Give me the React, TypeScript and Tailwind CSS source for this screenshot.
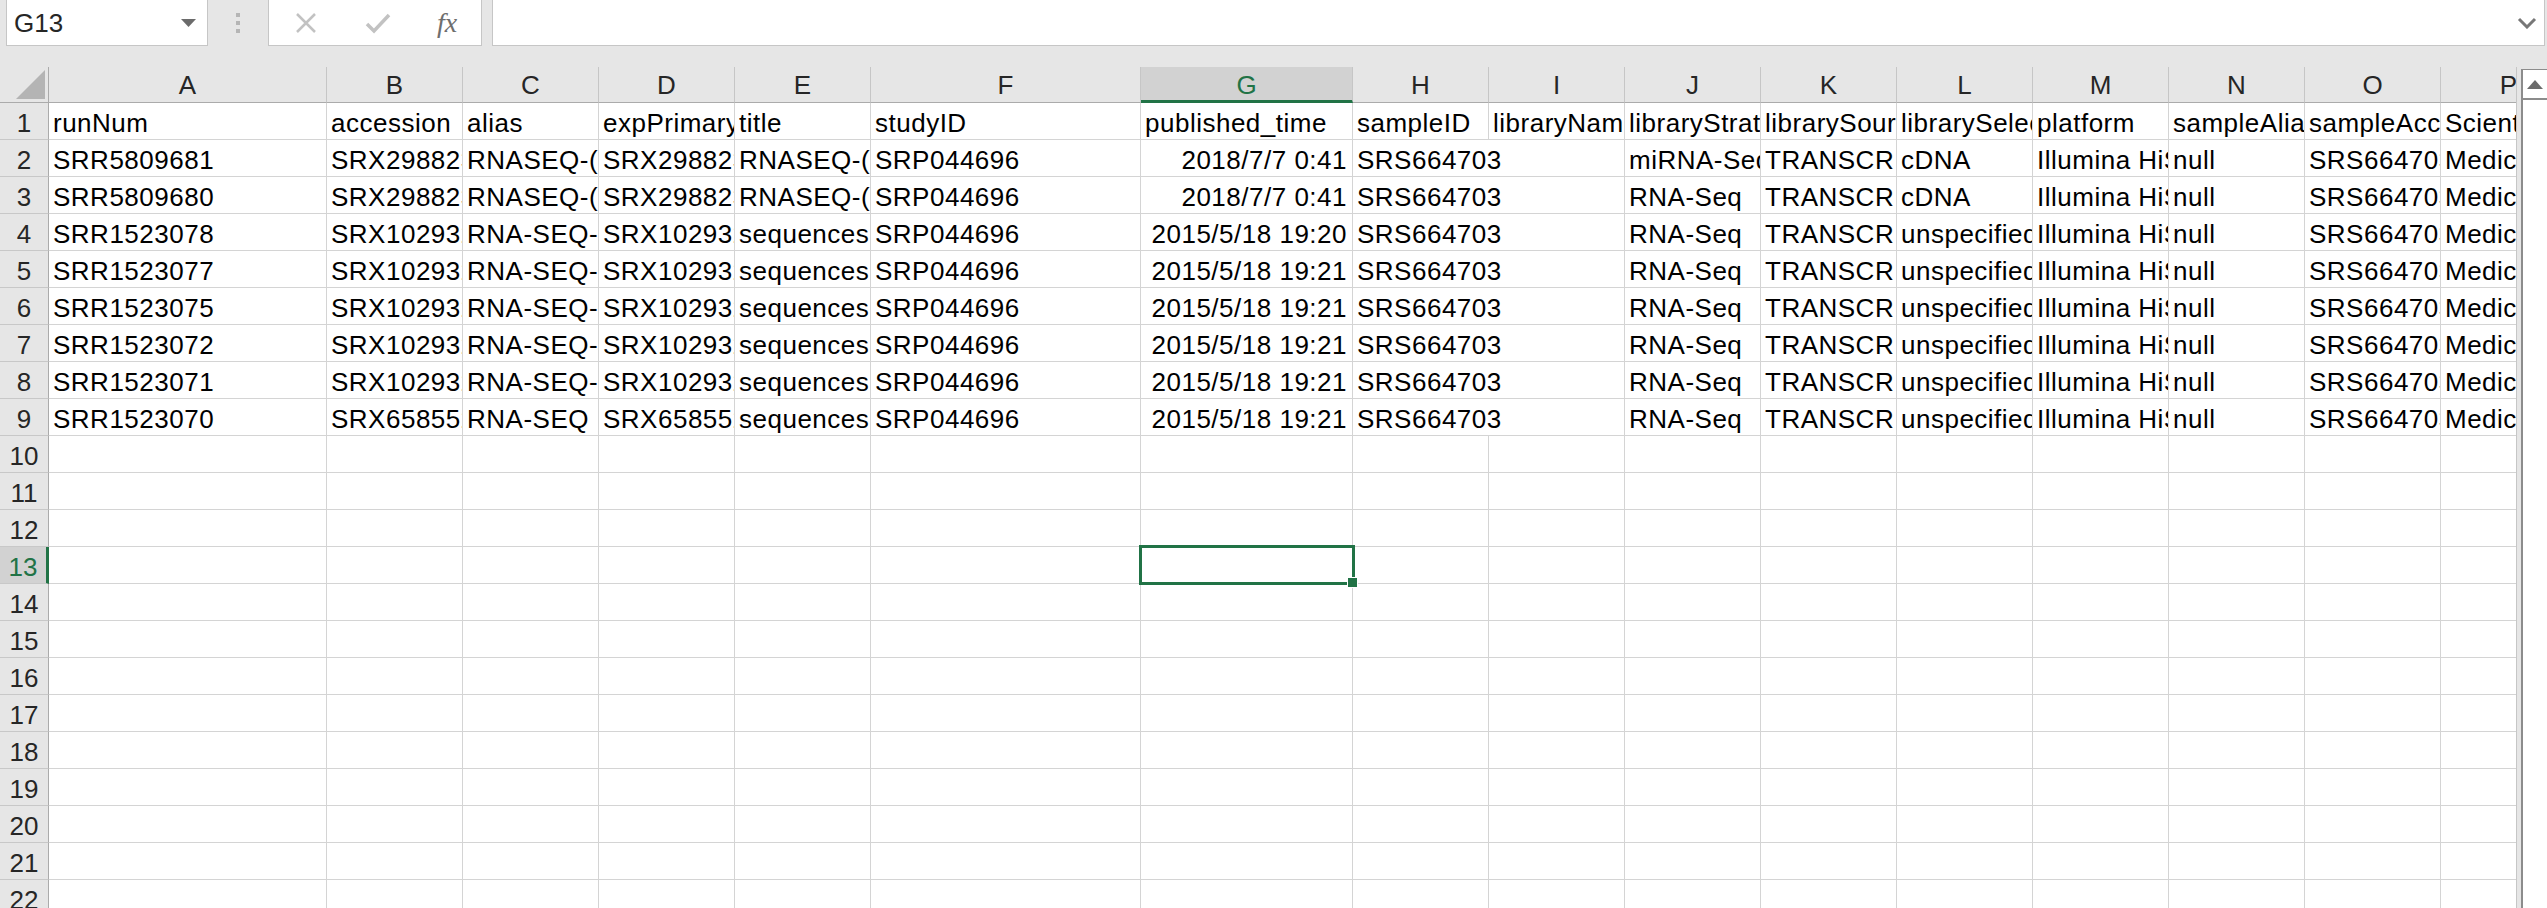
import React from "react";

type Col = { id: string; w: string };

const COLS: Col[] = [
  { id: "A", w: "w-[278px]" },
  { id: "B", w: "w-[136px]" },
  { id: "C", w: "w-[136px]" },
  { id: "D", w: "w-[136px]" },
  { id: "E", w: "w-[136px]" },
  { id: "F", w: "w-[270px]" },
  { id: "G", w: "w-[212px]" },
  { id: "H", w: "w-[136px]" },
  { id: "I", w: "w-[136px]" },
  { id: "J", w: "w-[136px]" },
  { id: "K", w: "w-[136px]" },
  { id: "L", w: "w-[136px]" },
  { id: "M", w: "w-[136px]" },
  { id: "N", w: "w-[136px]" },
  { id: "O", w: "w-[136px]" },
  { id: "P", w: "w-[136px]" },
];

const HEADER = [
  "runNum", "accession", "alias", "expPrimaryID", "title", "studyID", "published_time", "sampleID",
  "libraryName", "libraryStrategy", "librarySource", "librarySelection", "platform", "sampleAlias",
  "sampleAccession", "ScientificName",
];

const mk = (run: string, acc: string, alias: string, title: string, time: string, strat: string, sel: string) => [
  run, acc, alias, acc, title, "SRP044696", time, "SRS664703", "", strat, "TRANSCRIPTOMIC", sel,
  "Illumina HiSeq 2000", "null", "SRS664703", "Medicago truncatula",
];

const DATA: string[][] = [
  HEADER,
  mk("SRR5809681", "SRX2988235", "RNASEQ-(miRNA)", "RNASEQ-(miRNA)", "2018/7/7 0:41", "miRNA-Seq", "cDNA"),
  mk("SRR5809680", "SRX2988234", "RNASEQ-(mRNA)", "RNASEQ-(mRNA)", "2018/7/7 0:41", "RNA-Seq", "cDNA"),
  mk("SRR1523078", "SRX1029324", "RNA-SEQ-1", "sequences of", "2015/5/18 19:20", "RNA-Seq", "unspecified"),
  mk("SRR1523077", "SRX1029323", "RNA-SEQ-2", "sequences of", "2015/5/18 19:21", "RNA-Seq", "unspecified"),
  mk("SRR1523075", "SRX1029322", "RNA-SEQ-3", "sequences of", "2015/5/18 19:21", "RNA-Seq", "unspecified"),
  mk("SRR1523072", "SRX1029321", "RNA-SEQ-4", "sequences of", "2015/5/18 19:21", "RNA-Seq", "unspecified"),
  mk("SRR1523071", "SRX1029320", "RNA-SEQ-5", "sequences of", "2015/5/18 19:21", "RNA-Seq", "unspecified"),
  mk("SRR1523070", "SRX6585521", "RNA-SEQ", "sequences of", "2015/5/18 19:21", "RNA-Seq", "unspecified"),
];

const ROW_COUNT = 22;
const SEL_ROW = 13;
const SEL_COL = 6; // G

const Cell = ({ col, ci, ri, text }: { col: Col; ci: number; ri: number; text: string }) => {
  // H spills into the empty I cell on data rows, Excel drops the gridline there
  const spill = ci === 7 && ri >= 2 && ri <= 9;
  const isTime = ci === 6 && ri >= 2;
  const selected = ri === SEL_ROW && ci === SEL_COL;
  return (
    <div
      className={`${col.w} relative h-[37px] shrink-0 border-b border-[#d4d4d4] whitespace-nowrap pt-[3px] leading-[34px] tracking-[0.5px] ${
        spill ? "overflow-visible border-r-0 z-10" : "overflow-hidden border-r"
      } ${isTime ? "text-right pr-[5px]" : "pl-[4px]"} ${selected ? "overflow-visible z-20" : ""}`}
    >
      {text}
      {selected && (
        <div className="absolute left-[-2px] top-[-2px] right-[-3px] bottom-[-2px] border-[3px] border-[#217346]">
          <div className="absolute right-[-5px] bottom-[-5px] w-[9px] h-[9px] bg-[#217346] ring-1 ring-white"></div>
        </div>
      )}
    </div>
  );
};

const App = () => {
  const rows = Array.from({ length: ROW_COUNT }, (_, i) => i + 1);

  return (
    <div className="w-[2547px] h-[908px] overflow-hidden bg-[#e6e6e6] font-['Liberation_Sans',Arial,sans-serif] text-[26px] text-black">
      {/* formula bar */}
      <div className="h-[46px] flex items-stretch">
        <div className="ml-[6px] w-[202px] bg-white border border-t-0 border-[#c6c6c6] flex items-center pl-[7px] pr-[11px]">
          <span className="flex-1 text-[#262626] leading-none">G13</span>
          <svg width="15" height="8" viewBox="0 0 15 8">
            <path d="M0 0H15L7.5 8Z" fill="#6b6b6b" />
          </svg>
        </div>
        <div className="w-[60px] flex flex-col items-center justify-center gap-[4px]">
          <span className="w-[4px] h-[4px] bg-[#b5b5b5]"></span>
          <span className="w-[4px] h-[4px] bg-[#b5b5b5]"></span>
          <span className="w-[4px] h-[4px] bg-[#b5b5b5]"></span>
        </div>
        <div className="w-[214px] bg-white border border-t-0 border-[#c6c6c6] flex items-center pl-[25px]">
          <svg width="24" height="24" viewBox="0 0 24 24">
            <path d="M3 3L21 21M21 3L3 21" stroke="#c2c2c2" strokeWidth="2.5" />
          </svg>
          <svg className="ml-[47px]" width="26" height="24" viewBox="0 0 26 24">
            <path d="M2 13L9 20L24 4" stroke="#c2c2c2" strokeWidth="3.5" fill="none" />
          </svg>
          <span className="ml-[46px] italic font-['Liberation_Serif',serif] text-[28px] text-[#6e6e6e] leading-none">fx</span>
        </div>
        <div className="ml-[10px] mr-[2px] flex-1 bg-white border border-t-0 border-[#c6c6c6] flex items-center justify-end pr-[7px]">
          <svg width="20" height="12" viewBox="0 0 20 12">
            <path d="M2 2L10 10L18 2" stroke="#777" strokeWidth="3" fill="none" />
          </svg>
        </div>
      </div>

      <div className="h-[21px]"></div>

      {/* sheet */}
      <div className="flex h-[841px]">
        <div className="w-[2517px] shrink-0 overflow-hidden bg-white border-r border-[#c6c6c6] flex flex-col">
          {/* column headers */}
          <div className="flex h-[36px] shrink-0 bg-[#e6e6e6]">
            <div className="w-[49px] shrink-0 border-r border-b border-[#ababab] flex items-end justify-end p-[3px]">
              <svg width="29" height="29" viewBox="0 0 29 29">
                <path d="M29 0V29H0Z" fill="#b4b4b4" />
              </svg>
            </div>
            {COLS.map((c, ci) => (
              <div
                key={c.id}
                className={`${c.w} shrink-0 text-center pt-[2px] leading-[32px] border-r border-r-[#c6c6c6] ${
                  ci === SEL_COL
                    ? "bg-[#d2d2d2] text-[#217346] border-b-[3px] border-b-[#217346]"
                    : "border-b border-b-[#ababab] text-[#262626]"
                }`}
              >
                {c.id}
              </div>
            ))}
          </div>

          {rows.map((ri) => (
            <div key={ri} className="flex shrink-0">
              <div
                className={`w-[49px] h-[37px] shrink-0 text-center pt-[3px] leading-[34px] border-b border-b-[#c8c8c8] ${
                  ri === SEL_ROW
                    ? "bg-[#d2d2d2] text-[#217346] border-r-[3px] border-r-[#217346]"
                    : "bg-[#e6e6e6] text-[#262626] border-r border-r-[#ababab]"
                }`}
              >
                {ri}
              </div>
              {COLS.map((c, ci) => (
                <Cell key={c.id} col={c} ci={ci} ri={ri} text={DATA[ri - 1]?.[ci] ?? ""} />
              ))}
            </div>
          ))}
        </div>

        {/* vertical scrollbar */}
        <div className="ml-[4px] mt-[2px] flex-1 bg-white border-l-2 border-t border-[#8c8c8c] flex flex-col">
          <div className="h-[30px] border-b-2 border-[#8c8c8c] flex items-center justify-center">
            <svg width="16" height="9" viewBox="0 0 16 9">
              <path d="M0 9L8 0L16 9Z" fill="#6b6b6b" />
            </svg>
          </div>
        </div>
      </div>
    </div>
  );
};

export default App;
